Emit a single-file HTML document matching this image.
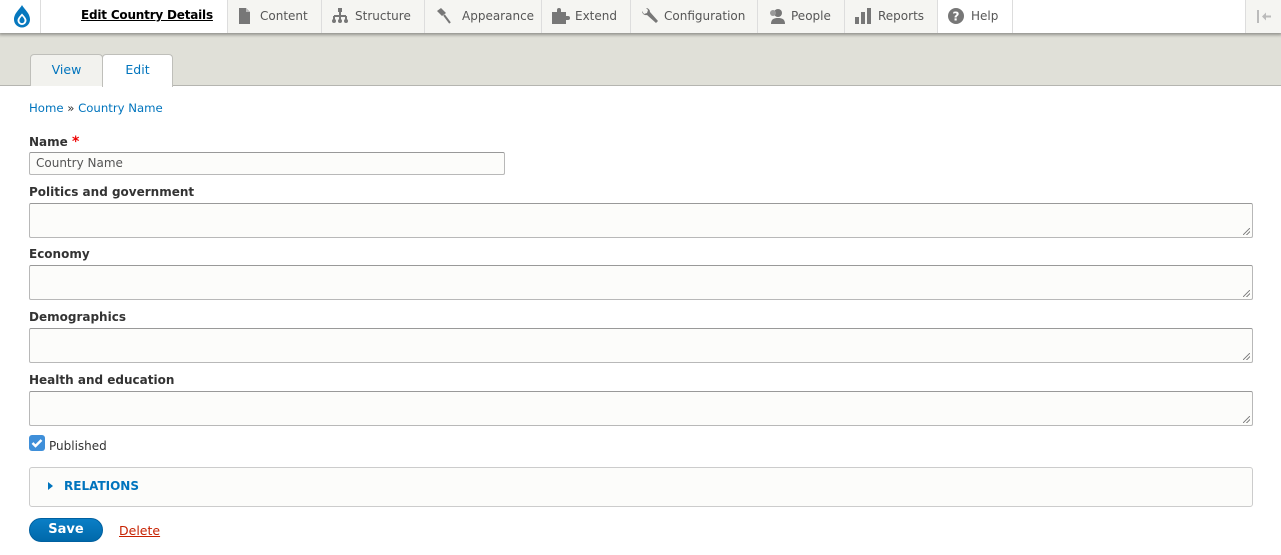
<!DOCTYPE html>
<html><head><meta charset="utf-8"><style>
*{box-sizing:border-box;margin:0;padding:0}
body{width:1281px;height:555px;overflow:hidden;background:#fff;font-family:"DejaVu Sans","Liberation Sans",sans-serif;font-size:12px;color:#333;position:relative}
.bar{position:absolute;left:0;top:0;width:1281px;height:33px;background:#fff;box-shadow:0 1px 3px 1px rgba(0,0,0,.35);z-index:2}
.it{position:absolute;top:0;height:33px;background:#f5f5f2;border-left:1px solid #ddd;color:#565656;font-size:12px;line-height:32px;padding-left:10px}
.it svg{position:absolute;left:10px;top:8px}
.it span{position:absolute;top:0}
.gray{position:absolute;left:0;top:33px;width:1281px;height:53px;background:#e0e0d8;border-bottom:1px solid #b5b5b0}
.tab{position:absolute;top:54px;height:32px;border:1px solid #bfbfba;border-bottom:none;border-radius:4px 4px 0 0;color:#0074bd;font-size:12.5px;text-align:center;line-height:30px}
a{color:#0074bd;text-decoration:none}
.lab{position:absolute;left:29px;font-weight:bold;font-size:12px;color:#333}
.ta{position:absolute;left:29px;width:1224px;height:35px;background:#fcfcfa;border:1px solid #b8b8b8;border-top-color:#999;border-radius:2px}
.ta:after{content:"";position:absolute;right:2px;bottom:2px;width:7px;height:7px;background:linear-gradient(135deg,transparent 45%,#888 45%,#888 55%,transparent 55%,transparent 70%,#888 70%,#888 80%,transparent 80%)}
</style></head><body>
<div class="bar">
 <svg style="position:absolute;left:11px;top:4px" width="22" height="26" viewBox="0 0 22 26"><path d="M11 1C9 5 3 9 3 15.5a8 8 0 0 0 16 0C19 9 13 5 11 1z" fill="#0678be"/><path d="M11 9.5c-2 2.5-4.5 4.5-4.5 7a4.5 4.5 0 0 0 9 0c0-2.5-2.5-4.5-4.5-7z" fill="#fff"/><path d="M11 12c-1.3 1.6-2.6 3-2.6 4.5a2.6 2.6 0 0 0 5.2 0c0-1.5-1.3-2.9-2.6-4.5z" fill="#0678be"/></svg>
 <div style="position:absolute;left:40px;top:0;width:1px;height:33px;background:#ddd"></div>
 <div style="position:absolute;left:81px;top:0;line-height:31px;font-weight:bold;font-size:12px;letter-spacing:-0.2px;color:#000;text-decoration:underline">Edit Country Details</div>
 <div class="it" style="left:227px;width:94px"><svg width="12" height="16"><path d="M1 0h7l4 4v12H1z" fill="#777"/><path d="M8 0v4h4" fill="#bbb"/></svg><span style="left:32px">Content</span></div>
 <div class="it" style="left:321px;width:103px"><svg width="16" height="16"><rect x="6" y="0" width="4" height="4" fill="#777"/><path d="M8 4v4M2 8h12M2 8v4M8 8v4M14 8v4" stroke="#777" stroke-width="2" fill="none"/><circle cx="2" cy="13" r="2" fill="#777"/><circle cx="8" cy="13" r="2" fill="#777"/><circle cx="14" cy="13" r="2" fill="#777"/></svg><span style="left:33px">Structure</span></div>
 <div class="it" style="left:424px;width:117px"><svg width="18" height="16"><path d="M2 3l4-3 5 5-4 3z" fill="#777"/><path d="M9 7l6 8" stroke="#777" stroke-width="2"/></svg><span style="left:37px">Appearance</span></div>
 <div class="it" style="left:541px;width:89px"><svg width="18" height="16"><path d="M0 4h5v-2a2 2 0 0 1 4 0v2h5v4h2a2 2 0 0 1 0 4h-2v4H0z" fill="#777"/></svg><span style="left:33px">Extend</span></div>
 <div class="it" style="left:630px;width:127px"><svg width="18" height="16"><path d="M1 3a4 4 0 0 0 5 4l9 8 2-2-8-9a4 4 0 0 0-4-4l2 2-1 3-3 1z" fill="#777"/></svg><span style="left:33px">Configuration</span></div>
 <div class="it" style="left:757px;width:87px"><svg width="18" height="16"><circle cx="10" cy="5" r="4" fill="#777"/><path d="M3 16c0-5 3-6 7-6s7 1 7 6z" fill="#777"/><circle cx="5" cy="5" r="3" fill="#999"/></svg><span style="left:33px">People</span></div>
 <div class="it" style="left:844px;width:93px"><svg width="16" height="16"><rect x="0" y="9" width="4" height="7" fill="#777"/><rect x="6" y="4" width="4" height="12" fill="#777"/><rect x="12" y="0" width="4" height="16" fill="#777"/></svg><span style="left:33px">Reports</span></div>
 <div class="it" style="left:937px;width:76px;background:#fff;border-right:1px solid #ddd"><svg width="16" height="16"><circle cx="8" cy="8" r="8" fill="#777"/><text x="8" y="12.5" font-size="12" font-weight="bold" fill="#fff" text-anchor="middle" font-family="DejaVu Sans">?</text></svg><span style="left:33px">Help</span></div>
 <div class="it" style="left:1245px;width:36px"><svg width="16" height="14" style="left:11px;top:10px"><rect x="0" y="0" width="2" height="13" fill="#bbb"/><path d="M5 6.5l4-4v3h5v2H9v3z" fill="#bbb"/></svg></div>
</div>
<div class="gray"></div>
<div class="tab" style="left:30px;width:73px;background:#f2f2ee">View</div>
<div class="tab" style="left:102px;width:71px;background:#fff;height:33px">Edit</div>
<div style="position:absolute;left:29px;top:101px;font-size:11.7px"><a>Home</a> » <a>Country Name</a></div>
<div class="lab" style="top:134px">Name <span style="color:#e00;font-size:14px">*</span></div>
<div style="position:absolute;left:29px;top:152px;width:476px;height:23px;background:#fcfcfa;border:1px solid #b8b8b8;border-top-color:#999;border-radius:2px;padding-left:6px;line-height:20px;font-size:12px;color:#555">Country Name</div>
<div class="lab" style="top:185px">Politics and government</div><div class="ta" style="top:203px"></div>
<div class="lab" style="top:247px">Economy</div><div class="ta" style="top:265px"></div>
<div class="lab" style="top:310px">Demographics</div><div class="ta" style="top:328px"></div>
<div class="lab" style="top:373px">Health and education</div><div class="ta" style="top:391px"></div>
<div style="position:absolute;left:29px;top:435px;width:16px;height:16px;background:#3f8fd9;border-radius:3px"><svg width="16" height="16"><path d="M3.5 8l3 3 6-6" stroke="#fff" stroke-width="2.5" fill="none"/></svg></div>
<div style="position:absolute;left:49px;top:439px;font-size:12px">Published</div>
<div style="position:absolute;left:29px;top:467px;width:1224px;height:40px;border:1px solid #ccc;border-radius:3px;background:#fcfcfa"></div>
<div style="position:absolute;left:48px;top:482px;width:0;height:0;border-left:5px solid #0074bd;border-top:4px solid transparent;border-bottom:4px solid transparent"></div>
<div style="position:absolute;left:64px;top:479px;font-weight:bold;color:#0074bd;font-size:12px">RELATIONS</div>
<div style="position:absolute;left:29px;top:518px;width:74px;height:24px;border-radius:12px;background:linear-gradient(#0a7fc6,#0069aa);border:1px solid #0060a0;color:#fff;font-weight:bold;font-size:13px;text-align:center;line-height:22px">Save</div>
<div style="position:absolute;left:119px;top:523px;color:#c72100;text-decoration:underline;font-size:12.5px">Delete</div>
</body></html>
